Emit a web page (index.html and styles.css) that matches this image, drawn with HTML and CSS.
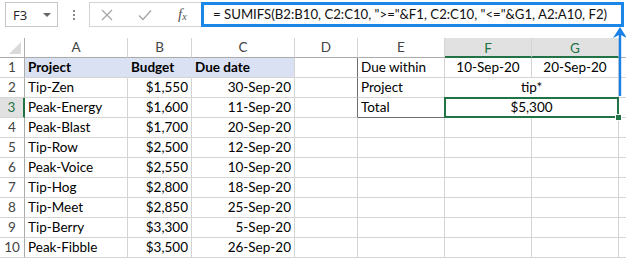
FILE: index.html
```html
<!DOCTYPE html>
<html>
<head>
<meta charset="utf-8">
<link rel="stylesheet" href="styles.css">
</head>
<body>
<div class="app">
  <div class="toolbar">
    <div class="namebox"><span class="ref">F3</span><span class="caret"></span></div>
    <div class="dots"><i></i><i></i><i></i></div>
    <div class="fnbox">
      <svg class="ico" width="12" height="12" viewBox="0 0 12 12"><path d="M1 1L11 11M11 1L1 11" stroke="#a6a6a6" stroke-width="1.3" fill="none"/></svg>
      <svg class="ico" width="14" height="12" viewBox="0 0 14 12"><path d="M1 6.5L5 10.5L13 1.5" stroke="#a6a6a6" stroke-width="1.4" fill="none"/></svg>
      <span class="fx">f<sub>x</sub></span>
    </div>
    <div class="formula">= SUMIFS(B2:B10, C2:C10, "&gt;="&amp;F1, C2:C10, "&lt;="&amp;G1, A2:A10, F2)</div>
  </div>
  <div class="sheet">
    <div class="c corner"><span class="tri"></span></div>
    <div class="c ch">A</div><div class="c ch">B</div><div class="c ch">C</div><div class="c ch">D</div><div class="c ch">E</div><div class="c ch sel">F</div><div class="c ch sel">G</div><div class="c ch end"></div>

    <div class="c rh">1</div><div class="c hd">Project</div><div class="c hd">Budget</div><div class="c hd last">Due date</div><div class="c dk"></div><div class="c">Due within</div><div class="c ctr">10-Sep-20</div><div class="c ctr">20-Sep-20</div><div class="c end"></div>

    <div class="c rh">2</div><div class="c">Tip-Zen</div><div class="c r">$1,550</div><div class="c r">30-Sep-20</div><div class="c dk"></div><div class="c">Project</div><div class="c ctr span2">tip*</div><div class="c end"></div>

    <div class="c rh rsel">3</div><div class="c">Peak-Energy</div><div class="c r">$1,600</div><div class="c r">11-Sep-20</div><div class="c dk"></div><div class="c dkb">Total</div><div class="c ctr span2 active">$5,300<span class="handle"></span></div><div class="c end"></div>

    <div class="c rh">4</div><div class="c">Peak-Blast</div><div class="c r">$1,700</div><div class="c r">20-Sep-20</div><div class="c"></div><div class="c"></div><div class="c"></div><div class="c"></div><div class="c end"></div>

    <div class="c rh">5</div><div class="c">Tip-Row</div><div class="c r">$2,500</div><div class="c r">12-Sep-20</div><div class="c"></div><div class="c"></div><div class="c"></div><div class="c"></div><div class="c end"></div>

    <div class="c rh">6</div><div class="c">Peak-Voice</div><div class="c r">$2,550</div><div class="c r">10-Sep-20</div><div class="c"></div><div class="c"></div><div class="c"></div><div class="c"></div><div class="c end"></div>

    <div class="c rh">7</div><div class="c">Tip-Hog</div><div class="c r">$2,800</div><div class="c r">18-Sep-20</div><div class="c"></div><div class="c"></div><div class="c"></div><div class="c"></div><div class="c end"></div>

    <div class="c rh">8</div><div class="c">Tip-Meet</div><div class="c r">$2,850</div><div class="c r">25-Sep-20</div><div class="c"></div><div class="c"></div><div class="c"></div><div class="c"></div><div class="c end"></div>

    <div class="c rh">9</div><div class="c">Tip-Berry</div><div class="c r">$3,300</div><div class="c r">5-Sep-20</div><div class="c"></div><div class="c"></div><div class="c"></div><div class="c"></div><div class="c end"></div>

    <div class="c rh">10</div><div class="c">Peak-Fibble</div><div class="c r">$3,500</div><div class="c r">26-Sep-20</div><div class="c"></div><div class="c"></div><div class="c"></div><div class="c"></div><div class="c end"></div>
  </div>
  <svg class="arrow" width="16" height="72" viewBox="0 0 16 72">
    <path d="M8 4V70" stroke="#1a7fe6" stroke-width="2.4" fill="none"/>
    <path d="M8 1L1 12L8 8.5L15 12Z" fill="#1a7fe6"/>
  </svg>
</div>
</body>
</html>
```
FILE: styles.css
```css
* { box-sizing: border-box; }
html, body { margin: 0; padding: 0; background: #fff; }
.app {
  position: relative;
  width: 626px;
  height: 258px;
  overflow: hidden;
  font-family: Lato, "Noto Sans", sans-serif;
  color: #000;
}
.toolbar {
  display: flex;
  align-items: flex-start;
  height: 38px;
  padding-top: 2px;
  padding-left: 5px;
}
.namebox {
  width: 53px;
  height: 25px;
  border: 1px solid #c6c6c6;
  display: flex;
  align-items: center;
  justify-content: space-between;
  padding: 0 6px 0 7px;
  font-family: "Open Sans", sans-serif;
  font-size: 13px;
  color: #222;
}
.caret {
  width: 0; height: 0;
  border-left: 4px solid transparent;
  border-right: 4px solid transparent;
  border-top: 4px solid #666;
}
.dots {
  width: 31px;
  height: 25px;
  display: flex;
  flex-direction: column;
  align-items: center;
  justify-content: center;
  gap: 2px;
}
.dots i { width: 2px; height: 2px; background: #8a8a8a; display: block; }
.fnbox {
  width: 112px;
  height: 25px;
  border: 1px solid #d4d4d4;
  border-right: none;
  display: flex;
  align-items: center;
  padding-left: 11px;
}
.fnbox .ico { display: block; }
.fnbox .ico + .ico { margin-left: 25px; }
.fx {
  margin-left: 26px;
  font-family: "Liberation Serif", serif;
  font-style: italic;
  font-size: 15px;
  color: #555;
  line-height: 1;
}
.fx sub { font-size: 10px; vertical-align: -1px; }
.formula {
  width: 423px;
  height: 25px;
  border: 3px solid #1a86e8;
  padding-left: 9px;
  font-family: Lato, sans-serif;
  font-size: 13.2px;
  line-height: 19px;
  color: #111;
  white-space: nowrap;
}
.sheet {
  display: grid;
  grid-template-columns: 25px 103px 64px 103px 63px 87px 87px 87px 7px;
  grid-auto-rows: 20px;
}
.c {
  border-right: 1px solid #d4d4d4;
  border-bottom: 1px solid #d4d4d4;
  padding: 0 3px;
  font-size: 13.5px;
  line-height: 19px;
  white-space: nowrap;
  overflow: visible;
  position: relative;
}
.c.end { border-right: none; }
.r { text-align: right; }
.ctr { text-align: center; }
.span2 { grid-column: span 2; }
.corner { position: relative; border-right-color: #ababab; border-bottom-color: #ababab; }
.tri {
  position: absolute;
  right: 3px; bottom: 3px;
  width: 0; height: 0;
  border-left: 12px solid transparent;
  border-bottom: 12px solid #dadada;
}
.ch {
  text-align: center;
  color: #444;
  border-bottom-color: #ababab;
}
.ch.sel {
  background: #e1e1e1;
  color: #217346;
  border-bottom: 2px solid #217346;
  line-height: 20px;
}
.rh {
  text-align: center;
  color: #444;
  padding: 0;
  border-right-color: #ababab;
}
.rh.rsel {
  background: #e1e1e1;
  color: #217346;
  border-right: 2px solid #217346;
}
.hd {
  background: #d9e1f2;
  font-weight: bold;
  border-right-color: #d9e1f2;
}
.hd.last { border-right-color: #d4d4d4; }
.dk { border-right-color: #6e6e6e; }
.dkb { border-bottom-color: #6e6e6e; }
.active::after {
  content: "";
  position: absolute;
  left: -1px; top: -1px; right: -1px; bottom: -1px;
  border: 2px solid #217346;
  pointer-events: none;
}
.handle {
  position: absolute;
  right: -4px; bottom: -4px;
  width: 7px; height: 7px;
  background: #217346;
  border: 1px solid #fff;
  z-index: 2;
}
.arrow {
  position: absolute;
  left: 612px;
  top: 26px;
}
```
